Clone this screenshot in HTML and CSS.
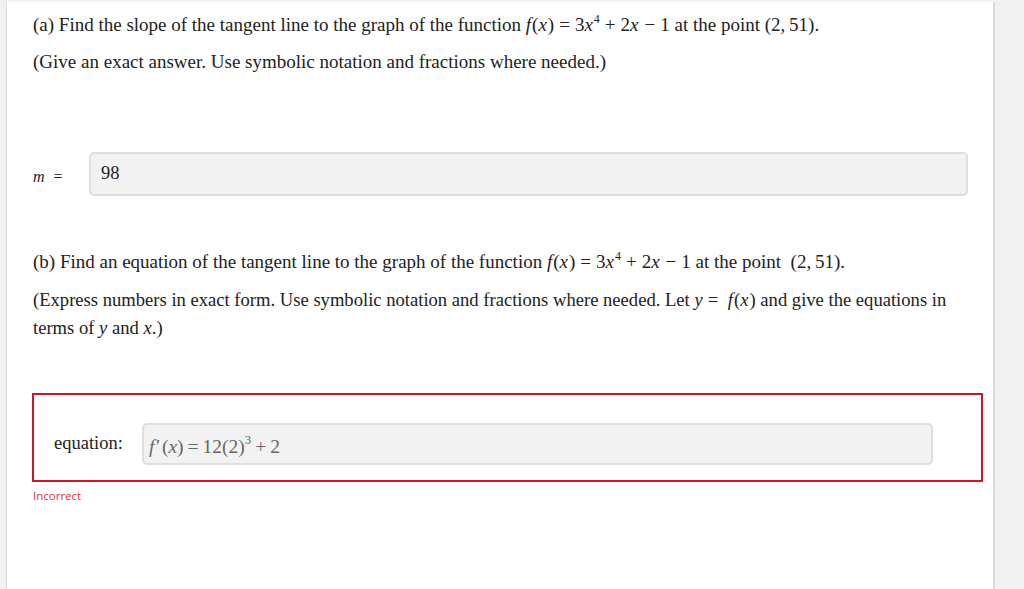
FILE: index.html
```html
<!DOCTYPE html>
<html lang="en">
<head>
    <meta charset="UTF-8">
    <title>Tangent line</title>
    <link rel="stylesheet" href="styles.css">
</head>
<body>
    <div class="panel">
        <div class="part">
            <p class="prompt">(a) Find the slope of the tangent line to the graph of the function <span class="math"><i>f</i>(<i>x</i>)<span class="op">=</span>3<i>x</i><sup>4</sup><span class="op">+</span>2<i>x</i><span class="op">−</span>1</span> at the point (2,&thinsp;51).</p>
            <p class="hint">(Give an exact answer. Use symbolic notation and fractions where needed.)</p>

            <div class="answer-row row-a">
                <span class="answer-label"><i>m</i><span class="op">=</span></span>
                <div class="answer-box">98</div>
            </div>
        </div>

        <div class="part part-b">
            <p class="prompt">(b) Find an equation of the tangent line to the graph of the function <span class="math"><i>f</i>(<i>x</i>)<span class="op">=</span>3<i>x</i><sup>4</sup><span class="op">+</span>2<i>x</i><span class="op">−</span>1</span> at the point &nbsp;(2,&thinsp;51).</p>
            <p class="hint hint-wrap">(Express numbers in exact form. Use symbolic notation and fractions where needed. Let <i>y</i><span class="op">=</span>&nbsp;<span class="math"><i>f</i>(<i>x</i>)</span> and give the equations in<br>terms of <i>y</i> and <i>x</i>.)</p>

            <div class="answer-frame incorrect">
                <span class="answer-label plain">equation:</span>
                <div class="answer-box formula"><i>f</i>&#8202;′&#8202;(<i>x</i>)<span class="op-s">=</span>12(2)<sup>3</sup><span class="op-s">+</span>2</div>
            </div>
            <div class="feedback">Incorrect</div>
        </div>
    </div>
</body>
</html>
```

FILE: styles.css
```css
body {
    margin: 0;
    background: #f1f1f1;
    font-family: 'Liberation Serif', 'Times New Roman', serif;
    color: #222;
    height: 589px;
    overflow: hidden;
}

.panel {
    margin: 2px 0 0 6px;
    width: 989px;
    height: 600px;
    background: #fff;
    border-left: 1px solid #dcdcdc;
    border-right: 2px solid #dcdcdc;
    padding: 0 0 0 26px;
    box-sizing: border-box;
}

p {
    margin: 0;
    font-size: 19px;
}

.math i {
    padding-right: 1px;
}

.prompt {
    padding-top: 13px;
    line-height: 20px;
}

.hint {
    margin-top: 17px;
    line-height: 20px;
}

.hint-wrap {
    font-size: 18.6px;
    line-height: 28px;
    margin-top: 14px;
    width: 940px;
    white-space: nowrap;
}

.op {
    margin: 0 5px;
}

sup {
    font-size: 12px;
    vertical-align: 8px;
    line-height: 0;
}

.answer-row {
    display: flex;
    align-items: center;
    margin-top: 80px;
}

.answer-label {
    font-family: 'Liberation Serif', 'Times New Roman', serif;
    font-size: 16px;
    width: 56px;
    padding-top: 6px;
}

.answer-label .op {
    margin: 0 9px;
}

.answer-label.plain {
    font-size: 18.5px;
    width: 88px;
    padding-top: 10px;
}

.answer-box {
    flex: 1;
    box-sizing: border-box;
    height: 44px;
    background: #f2f2f2;
    border: 2px solid #dedede;
    border-radius: 5px;
    padding: 9px 10px;
    font-family: 'Liberation Serif', 'Times New Roman', serif;
    font-size: 18.5px;
    margin-right: 25px;
}

.part-b .prompt {
    padding-top: 56px;
}

.answer-frame {
    display: flex;
    align-items: flex-start;
    width: 951px;
    height: 89px;
    box-sizing: border-box;
    margin-top: 51px;
    margin-left: -1px;
    padding: 28px 48px 0 20px;
    border: 2px solid #c8192a;
}

.answer-frame .answer-box {
    height: 42px;
    margin-right: 0;
    padding: 11px 5px 0;
    color: #666;
    font-size: 19.5px;
}

.op-s {
    margin: 0 4px;
}

.formula sup {
    font-size: 13px;
    vertical-align: 9px;
}

.feedback {
    font-family: 'Open Sans', 'Liberation Sans', sans-serif;
    font-size: 11.5px;
    color: #e0353a;
    margin-top: 6px;
}
```
